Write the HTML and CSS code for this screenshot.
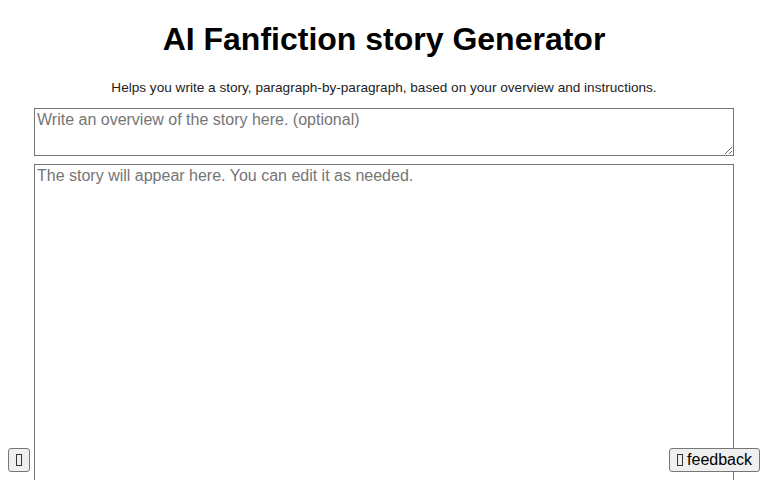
FILE: index.html
```html
<!doctype html>
<html>
<head>
    <meta charset="utf-8">
    <title>AI Fanfiction story Generator</title>
    <link rel="stylesheet" href="styles.css">
</head>
<body>
<div id="main">
    <h1 class="title">AI Fanfiction story Generator</h1>
    <p class="intro">Helps you write a story, paragraph-by-paragraph, based on your overview and instructions.</p>
    <textarea id="overview" placeholder="Write an overview of the story here. (optional)"></textarea>
    <textarea id="story" placeholder="The story will appear here. You can edit it as needed."></textarea>
</div>

<!-- bottom buttons -->
<button class="btn btn-menu" type="button"><span class="glyph"></span></button>
<button class="btn btn-feedback" type="button"><span class="glyph"></span> feedback</button>
</body>
</html>
```

FILE: styles.css
```css
body{margin:0; padding:0; background:#fff; font-family:"Liberation Sans", Arial, sans-serif; color:#000;}
#main{width:700px; margin:0 auto; display:flex; flex-direction:column;}
.title{margin:21px 0 0; font-size:32px; line-height:37px; text-align:center; font-weight:bold;}
.intro{margin:22px 0 13px; font-size:13.6px; line-height:15px; text-align:center; color:#222;}
textarea{display:block; width:700px; box-sizing:border-box; margin:0; padding:2px; border:1px solid #767676; font-family:"Liberation Sans", Arial, sans-serif; font-size:16px; line-height:18px; color:#000; background:#fff;}
textarea::placeholder{color:#757575;}
#overview{height:48px;}
#story{height:400px; margin-top:8px; resize:none;}

.btn{position:fixed; bottom:8px; height:24px; padding:0 7px; border:1px solid #767676; border-radius:3px; background:#efefef; font-family:"Liberation Sans", Arial, sans-serif; font-size:16px; line-height:20px; color:#000; display:flex; align-items:center; gap:4px;}
.btn-menu{left:8px; width:22px; justify-content:center; padding:0;}
.btn-feedback{right:8px;}
.glyph{display:inline-block; width:4px; height:10px; border:1px solid #333;}
```
